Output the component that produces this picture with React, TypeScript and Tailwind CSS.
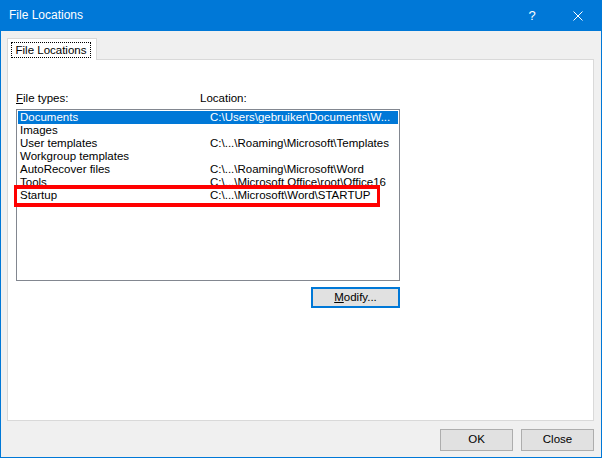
import React from "react";

const rows: [string, string][] = [
  ["Documents", "C:\\Users\\gebruiker\\Documents\\W..."],
  ["Images", ""],
  ["User templates", "C:\\...\\Roaming\\Microsoft\\Templates"],
  ["Workgroup templates", ""],
  ["AutoRecover files", "C:\\...\\Roaming\\Microsoft\\Word"],
  ["Tools", "C:\\...\\Microsoft Office\\root\\Office16"],
  ["Startup", "C:\\...\\Microsoft\\Word\\STARTUP"],
];

export default function App() {
  return (
    <div className="w-[602px] h-[458px] flex flex-col border-x border-b border-[#0078d7] bg-[#f0f0f0] font-['Liberation_Sans',Arial,sans-serif] text-black select-none overflow-hidden">
      {/* Title bar */}
      <div className="h-[31px] shrink-0 bg-[#0078d7] flex items-center text-white">
        <div className="pl-[8px] text-[12px] leading-[31px]">File Locations</div>
        <div className="ml-auto flex h-full">
          <div className="w-[46px] h-full flex items-center justify-center text-[13px]">?</div>
          <div className="w-[46px] h-full flex items-center justify-center">
            <svg width="10" height="10" viewBox="0 0 10 10">
              <path d="M0.5 0.5 L9.5 9.5 M9.5 0.5 L0.5 9.5" stroke="white" strokeWidth="1" fill="none" />
            </svg>
          </div>
        </div>
      </div>

      {/* Tab strip */}
      <div className="mt-[7px] ml-[6px] flex">
        <div className="relative z-10 -mb-px h-[22px] w-[90px] border border-b-0 border-[#d9d9d9] bg-white pl-[3px] pt-[3px]">
          <div className="h-[16px] w-[80px] border border-dotted border-black flex items-center justify-center text-[11.5px] leading-[14px]">
            File Locations
          </div>
        </div>
      </div>

      {/* Panel */}
      <div className="ml-[6px] w-[587px] h-[362px] shrink-0 border border-[#d9d9d9] bg-white pt-[32px] pl-[8px]">
        <div className="flex h-[13px] text-[11.5px] leading-[13px]">
          <div className="w-[184px]">
            <span className="underline">F</span>ile types:
          </div>
          <div>Location:</div>
        </div>
        <div className="mt-[4px] w-[384px] flex flex-col">
          <div className="relative h-[172px] border border-[#828790] bg-white p-px">
            {rows.map(([name, loc], i) => (
              <div
                key={name}
                className={
                  "flex h-[13px] pl-[2px] text-[11.5px] leading-[13px] whitespace-nowrap " +
                  (i === 0 ? "bg-[#0078d7] text-white" : "")
                }
              >
                <div className="w-[190px]">{name}</div>
                <div>{loc}</div>
              </div>
            ))}
            <div className="absolute left-[-3px] top-[75px] w-[366px] h-[22px] border-x-[3px] border-y-[4px] border-[#ff0000] pointer-events-none" />
          </div>
          <div className="mt-[6px] self-end w-[89px] h-[21px] border-2 border-[#0078d7] bg-[#e1e1e1] flex items-center justify-center text-[11.5px]">
            <span>
              <span className="underline">M</span>odify...
            </span>
          </div>
        </div>
      </div>

      {/* Bottom buttons */}
      <div className="mt-[8px] pr-[7px] flex justify-end gap-[8px]">
        <div className="w-[73px] h-[22px] border border-[#adadad] bg-[#e1e1e1] flex items-center justify-center text-[11.5px]">
          OK
        </div>
        <div className="w-[73px] h-[22px] border border-[#adadad] bg-[#e1e1e1] flex items-center justify-center text-[11.5px]">
          Close
        </div>
      </div>
    </div>
  );
}
